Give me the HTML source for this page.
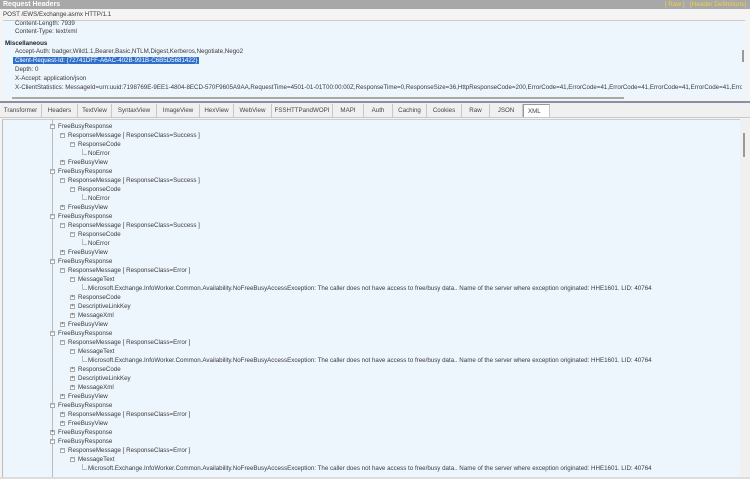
<!DOCTYPE html>
<html><head><meta charset="utf-8"><style>
*{margin:0;padding:0;box-sizing:border-box}
body{width:750px;height:479px;overflow:hidden;background:#f4f4f4;font-family:"Liberation Sans",Tahoma,sans-serif;font-size:6.2px;color:#3a3a3a;position:relative}
.a{position:absolute;white-space:nowrap;line-height:9px}
#title{position:absolute;left:0;top:0;width:750px;height:9px;background:#a8a8a8;color:#fff;font-weight:bold;font-size:7px;line-height:9px;padding-left:3px}
#title span{position:absolute;right:4px;color:#f0d040;font-weight:normal;font-size:6.4px}
#hdr{position:absolute;left:3px;top:20px;width:742px;height:78px;background:#eef6fd;border-top:1px solid #ccc}
#sel{background:#2f6fc9;color:#fff;padding:0 2px}
.tab{position:absolute;top:104px;height:13px;line-height:13px;border-right:1px solid #c8c8c8;text-align:center;color:#444;font-size:6.2px}
#content{position:absolute;left:2px;top:119px;width:738px;height:358px;background:#eef6fd;border-left:1px solid #bbb;border-top:1px solid #ccc}
.b{position:absolute;width:5px;height:5px;border:1px solid #aaa;background:#fff;font-size:5px;line-height:3px;text-align:center;color:#555}
.ln{position:absolute;background:#bbb}
</style></head><body>
<div id="title">Request Headers<span>[ Raw ]&nbsp;&nbsp; [Header Definitions]</span></div>
<div class="a" style="left:3px;top:10px">POST /EWS/Exchange.asmx HTTP/1.1</div>
<div id="hdr"></div>
<div class="a" style="left:15px;top:19px">Content-Length: 7939</div>
<div class="a" style="left:15px;top:27px">Content-Type: text/xml</div>
<div class="a" style="left:5px;top:39px;font-weight:bold;color:#222">Miscellaneous</div>
<div class="a" style="left:15px;top:47px">Accept-Auth: badger,Wild1.1,Bearer,Basic,NTLM,Digest,Kerberos,Negotiate,Nego2</div>
<div class="a" style="left:13px;top:56px"><span id="sel">Client-Request-Id: {72741DFF-A6AC-402B-991B-C6B5D5681422}</span></div>
<div class="a" style="left:15px;top:65px">Depth: 0</div>
<div class="a" style="left:15px;top:74px">X-Accept: application/json</div>
<div class="a" style="left:15px;top:83px;width:727px;overflow:hidden">X-ClientStatistics: MessageId=urn:uuid:7198769E-9EE1-4804-8ECD-570F9605A9AA,RequestTime=4501-01-01T00:00:00Z,ResponseTime=0,ResponseSize=36,HttpResponseCode=200,ErrorCode=41,ErrorCode=41,ErrorCode=41,ErrorCode=41,ErrorCode=41,Error</div>
<div style="position:absolute;left:742px;top:50px;width:2px;height:12px;background:#999"></div>
<div style="position:absolute;left:12px;top:97px;width:612px;height:2px;background:#aaa"></div>
<div style="position:absolute;left:0;top:101px;width:750px;height:2px;background:#8890a8"></div>
<div style="position:absolute;left:0;top:103px;width:750px;height:15px;background:#f0f0f0;border-bottom:1px solid #c8c8c8"></div>
<div class="tab" style="left:0;width:42px">Transformer</div>
<div class="tab" style="left:42px;width:36px">Headers</div>
<div class="tab" style="left:78px;width:34px">TextView</div>
<div class="tab" style="left:112px;width:45px">SyntaxView</div>
<div class="tab" style="left:157px;width:43px">ImageView</div>
<div class="tab" style="left:200px;width:34px">HexView</div>
<div class="tab" style="left:234px;width:38px">WebView</div>
<div class="tab" style="left:272px;width:61px">FSSHTTPandWOPI</div>
<div class="tab" style="left:333px;width:31px">MAPI</div>
<div class="tab" style="left:364px;width:29px">Auth</div>
<div class="tab" style="left:393px;width:34px">Caching</div>
<div class="tab" style="left:427px;width:35px">Cookies</div>
<div class="tab" style="left:462px;width:28px">Raw</div>
<div class="tab" style="left:490px;width:33px">JSON</div>
<div class="tab" style="left:523px;width:27px;background:#fff;border-left:1px solid #999;border-top:1px solid #999;text-align:left;padding-left:4px">XML</div>
<div id="content"></div>
<div style="position:absolute;left:740px;top:119px;width:10px;height:358px;background:#f0f0f0"></div>
<div style="position:absolute;left:743px;top:133px;width:2px;height:24px;background:#999"></div>
<div style="position:absolute;left:0;top:477px;width:750px;height:2px;background:#ddd"></div>
<div id="tree"></div>
<script>
var rows=[[0,'FreeBusyResponse','-'],[1,'ResponseMessage [ ResponseClass=Success ]','-'],[2,'ResponseCode','-'],[3,'NoError',''],[1,'FreeBusyView','+'],
[0,'FreeBusyResponse','-'],[1,'ResponseMessage [ ResponseClass=Success ]','-'],[2,'ResponseCode','-'],[3,'NoError',''],[1,'FreeBusyView','+'],
[0,'FreeBusyResponse','-'],[1,'ResponseMessage [ ResponseClass=Success ]','-'],[2,'ResponseCode','-'],[3,'NoError',''],[1,'FreeBusyView','+'],
[0,'FreeBusyResponse','-'],[1,'ResponseMessage [ ResponseClass=Error ]','-'],[2,'MessageText','-'],[3,'M',''],[2,'ResponseCode','+'],[2,'DescriptiveLinkKey','+'],[2,'MessageXml','+'],[1,'FreeBusyView','+'],
[0,'FreeBusyResponse','-'],[1,'ResponseMessage [ ResponseClass=Error ]','-'],[2,'MessageText','-'],[3,'M',''],[2,'ResponseCode','+'],[2,'DescriptiveLinkKey','+'],[2,'MessageXml','+'],[1,'FreeBusyView','+'],
[0,'FreeBusyResponse','-'],[1,'ResponseMessage [ ResponseClass=Error ]','+'],[1,'FreeBusyView','+'],
[0,'FreeBusyResponse','+'],
[0,'FreeBusyResponse','-'],[1,'ResponseMessage [ ResponseClass=Error ]','-'],[2,'MessageText','-'],[3,'M','']];
var M='Microsoft.Exchange.InfoWorker.Common.Availability.NoFreeBusyAccessException: The caller does not have access to free/busy data.. Name of the server where exception originated: HHE1601. LID: 40764';
var h='<div class="ln" style="left:52px;top:119px;width:1px;height:358px"></div>';
rows.forEach(function(r,i){var y=122+i*9;var lv=r[0];var bx=50+lv*10;var t=r[1]=='M'?M:r[1];
if(r[2])h+='<div class="b" style="left:'+bx+'px;top:'+(y+2)+'px">'+(r[2]=='-'?'−':'+')+'</div>';
else h+='<div class="ln" style="left:'+(bx+2)+'px;top:'+(y)+'px;width:1px;height:5px"></div><div class="ln" style="left:'+(bx+2)+'px;top:'+(y+5)+'px;width:5px;height:1px"></div>';
h+='<div class="a" style="left:'+(bx+8)+'px;top:'+y+'px">'+t+'</div>';});
document.getElementById('tree').innerHTML=h;
</script>
</body></html>
